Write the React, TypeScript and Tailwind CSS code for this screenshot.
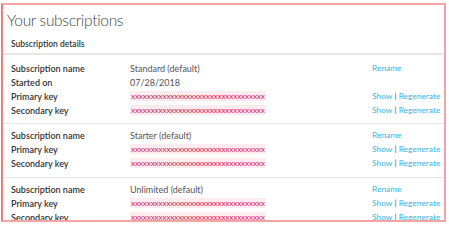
import React from "react";

const KEY = "xxxxxxxxxxxxxxxxxxxxxxxxxxxxxxxxxx";

type Row = { label: string; value?: string; key?: boolean; link?: "rename" | "show" };

const sections: Row[][] = [
  [
    { label: "Subscription name", value: "Standard (default)", link: "rename" },
    { label: "Started on", value: "07/28/2018" },
    { label: "Primary key", key: true, link: "show" },
    { label: "Secondary key", key: true, link: "show" },
  ],
  [
    { label: "Subscription name", value: "Starter (default)", link: "rename" },
    { label: "Primary key", key: true, link: "show" },
    { label: "Secondary key", key: true, link: "show" },
  ],
  [
    { label: "Subscription name", value: "Unlimited (default)", link: "rename" },
    { label: "Primary key", key: true, link: "show" },
    { label: "Secondary key", key: true, link: "show" },
  ],
];

function RowView({ r }: { r: Row }) {
  return (
    <div className="flex items-center h-[14px] text-[9px] leading-none">
      <div className="w-[127px] shrink-0 pl-[8px] text-[#333] font-semibold whitespace-nowrap">{r.label}</div>
      <div className="w-[242px] shrink-0">
        {r.key ? (
          <span className="inline-block bg-[#fcebef] text-[#d7285a] px-[1px] py-[1px] text-[8.3px] tracking-[-0.2px] whitespace-nowrap">
            {KEY}
          </span>
        ) : (
          <span className="text-[#555] whitespace-nowrap">{r.value}</span>
        )}
      </div>
      <div className="flex-1 text-[#33b5e5] whitespace-nowrap text-[8.4px]">
        {r.link === "rename" && <span>Rename</span>}
        {r.link === "show" && (
          <span>
            Show <span className="text-[#555]">|</span> Regenerate
          </span>
        )}
      </div>
    </div>
  );
}

export default function App() {
  return (
    <div className="w-[449px] h-[225px] bg-white pl-[1px] pt-[3px] overflow-hidden" style={{ fontFamily: "Lato, 'Open Sans', sans-serif" }}>
      <div className="w-[445px] h-[219px] border-2 border-[#f5a3a3] border-l-[#ef7f7f] overflow-hidden">
        <div className="pl-[4px] pt-[5px] h-[27px] text-[15.5px] font-light text-[#444] leading-[20px] tracking-[-0.3px] whitespace-nowrap">
          Your subscriptions
        </div>
        <div className="pl-[8px] pt-[3px] h-[21px] flex items-center text-[8.5px] font-semibold text-[#333]">
          Subscription details
        </div>
        {sections.map((s, i) => (
          <div
            key={i}
            className={i === 0 ? "border-t-2 border-[#e6e6e6] pt-[6px] pb-[6px]" : "border-t border-[#e6e6e6] pt-[4px] pb-[7px]"}
          >
            {s.map((r, j) => (
              <RowView key={j} r={r} />
            ))}
          </div>
        ))}
      </div>
    </div>
  );
}
